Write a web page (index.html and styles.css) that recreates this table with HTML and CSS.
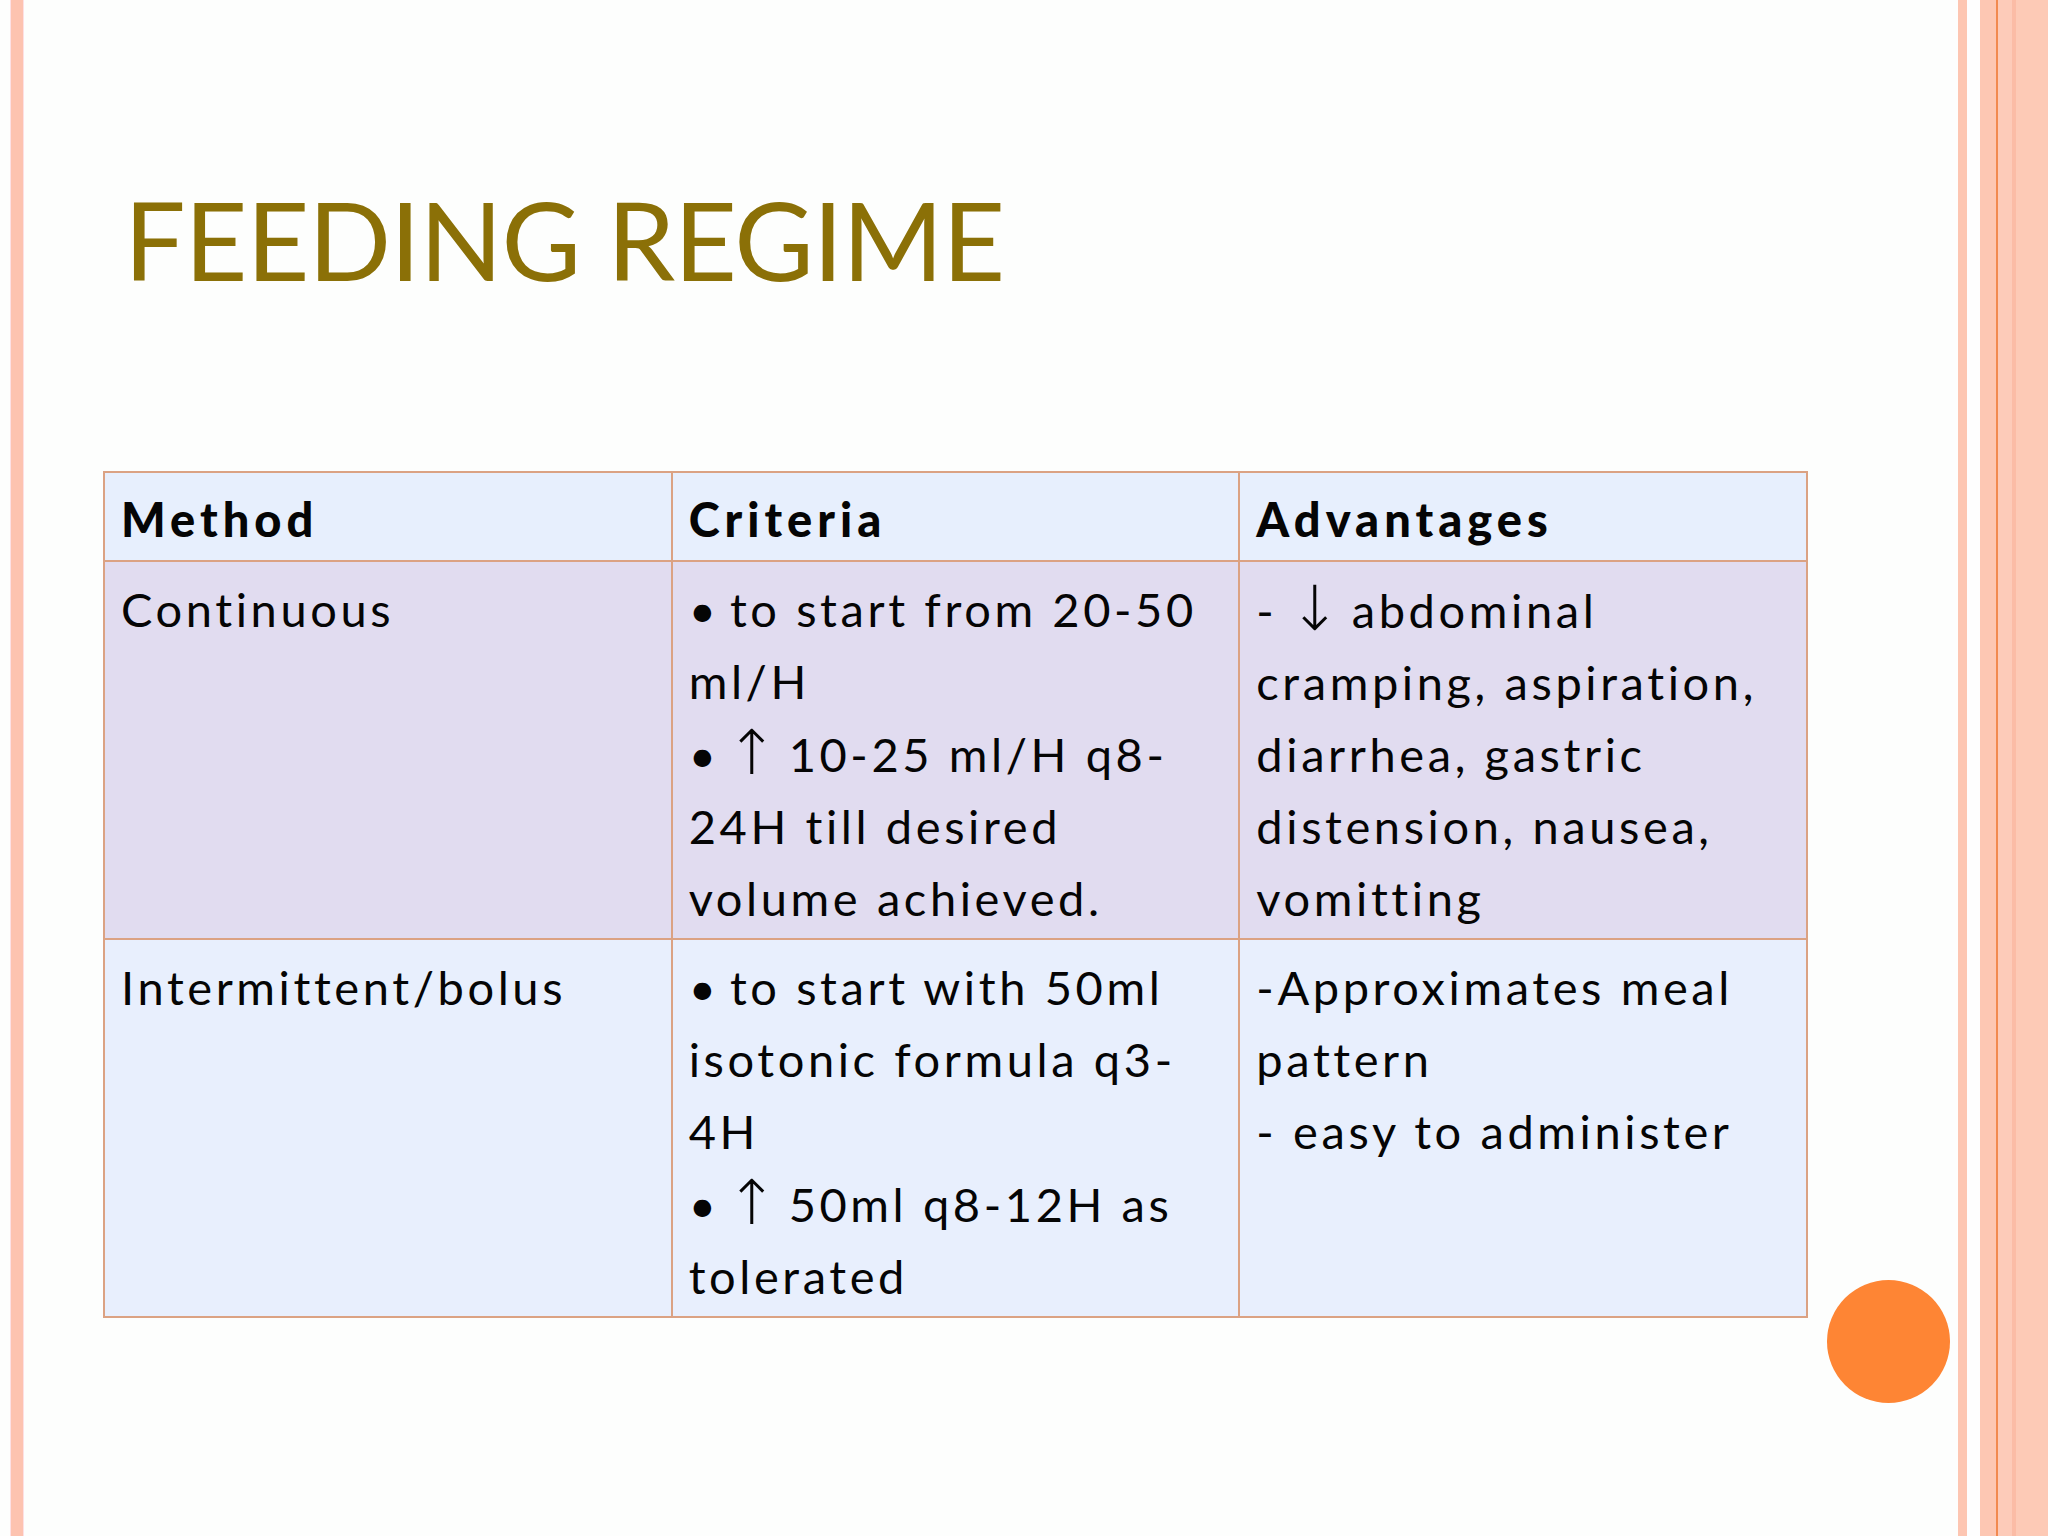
FILE: index.html
```html
<!DOCTYPE html>
<html>
<head>
<meta charset="utf-8">
<link rel="stylesheet" href="styles.css">
</head>
<body>
<div class="slide">
  <div class="stripe-left"></div>
  <div class="stripes-right">
    <div class="sr-a"></div>
    <div class="sr-gap"></div>
    <div class="sr-b"></div>
    <div class="sr-line"></div>
    <div class="sr-c"></div>
    <div class="sr-d"></div>
    <div class="sr-e"></div>
  </div>
  <div class="dot"></div>

  <div class="content">
    <h1 class="title">FEEDING REGIME</h1>
    <div class="grid">
      <div class="cell head">Method</div>
      <div class="cell head">Criteria</div>
      <div class="cell head">Advantages</div>

      <div class="cell odd">Continuous</div>
      <div class="cell odd"><span class="bul">• </span>to start from 20-50<br>ml/H<br><span class="bul">• </span><span class="arr">↑ </span>10-25 ml/H q8-<br>24H till desired<br>volume achieved.</div>
      <div class="cell odd">- <span class="arr">↓ </span>abdominal<br>cramping, aspiration,<br>diarrhea, gastric<br>distension, nausea,<br>vomitting</div>

      <div class="cell even">Intermittent/bolus</div>
      <div class="cell even"><span class="bul">• </span>to start with 50ml<br>isotonic formula q3-<br>4H<br><span class="bul">• </span><span class="arr">↑ </span>50ml q8-12H as<br>tolerated</div>
      <div class="cell even">-Approximates meal<br>pattern<br>- easy to administer</div>
    </div>
  </div>
</div>
</body>
</html>
```
FILE: styles.css
```css
html, body {
  margin: 0;
  padding: 0;
  background: #ffffff;
}
.slide {
  position: relative;
  width: 2048px;
  height: 1536px;
  overflow: hidden;
  background: #fdfefd;
}
.stripe-left {
  position: absolute;
  left: 11px;
  top: 0;
  width: 12px;
  height: 1536px;
  background: #fdc3b0;
  box-shadow: -1px 0 0 #fde0e4, 1px 0 0 #fde0e4;
}
.stripes-right {
  position: absolute;
  left: 1958px;
  top: 0;
  width: 90px;
  height: 1536px;
  display: flex;
}
.sr-a { width: 9px; background: #fdc6b2; }
.sr-gap { width: 13px; background: #fefefe; }
.sr-b { width: 16px; background: #fdc7b3; }
.sr-line { width: 2px; background: #f28a50; }
.sr-c { width: 14px; background: #fdcbb9; }
.sr-d { width: 4px; background: #fbbca6; }
.sr-e { flex: 1; background: #fdcab6; }
.dot {
  position: absolute;
  left: 1827px;
  top: 1280px;
  width: 123px;
  height: 123px;
  border-radius: 50%;
  background: #fe8534;
}
.content {
  padding-top: 174px;
  padding-left: 103px;
}
.title {
  margin: 0 0 166px 21px;
  font-family: Lato, "Liberation Sans", sans-serif;
  font-weight: 400;
  font-size: 109px;
  line-height: 1.2;
  color: #8b7007;
  letter-spacing: -1.1px;
}
.grid {
  width: 1705px;
  box-sizing: border-box;
  display: grid;
  grid-template-columns: 1fr 1fr 1fr;
  grid-template-rows: 87px 376px 376px;
  gap: 2px;
  padding: 2px;
  background: #dba283;
}
.cell {
  padding: 11px 12px 0 16px;
  font-family: Lato, "DejaVu Sans", sans-serif;
  font-size: 47px;
  line-height: 72px;
  letter-spacing: 3.6px;
  word-spacing: 0;
  color: #050505;
  white-space: nowrap;
}
.head {
  padding-top: 10px;
  font-weight: 900;
  letter-spacing: 5px;
  background: #e7effd;
}
.odd { background: #e1dcf0; }
.even { background: #e8effd; }
.bul {
  letter-spacing: 0;
  word-spacing: 2px;
}
.arr {
  font-family: "DejaVu Sans", sans-serif;
  font-weight: 200;
  font-size: 62px;
  letter-spacing: 0;
  word-spacing: -9px;
  margin-left: -4px;
  vertical-align: -2px;
}
```
